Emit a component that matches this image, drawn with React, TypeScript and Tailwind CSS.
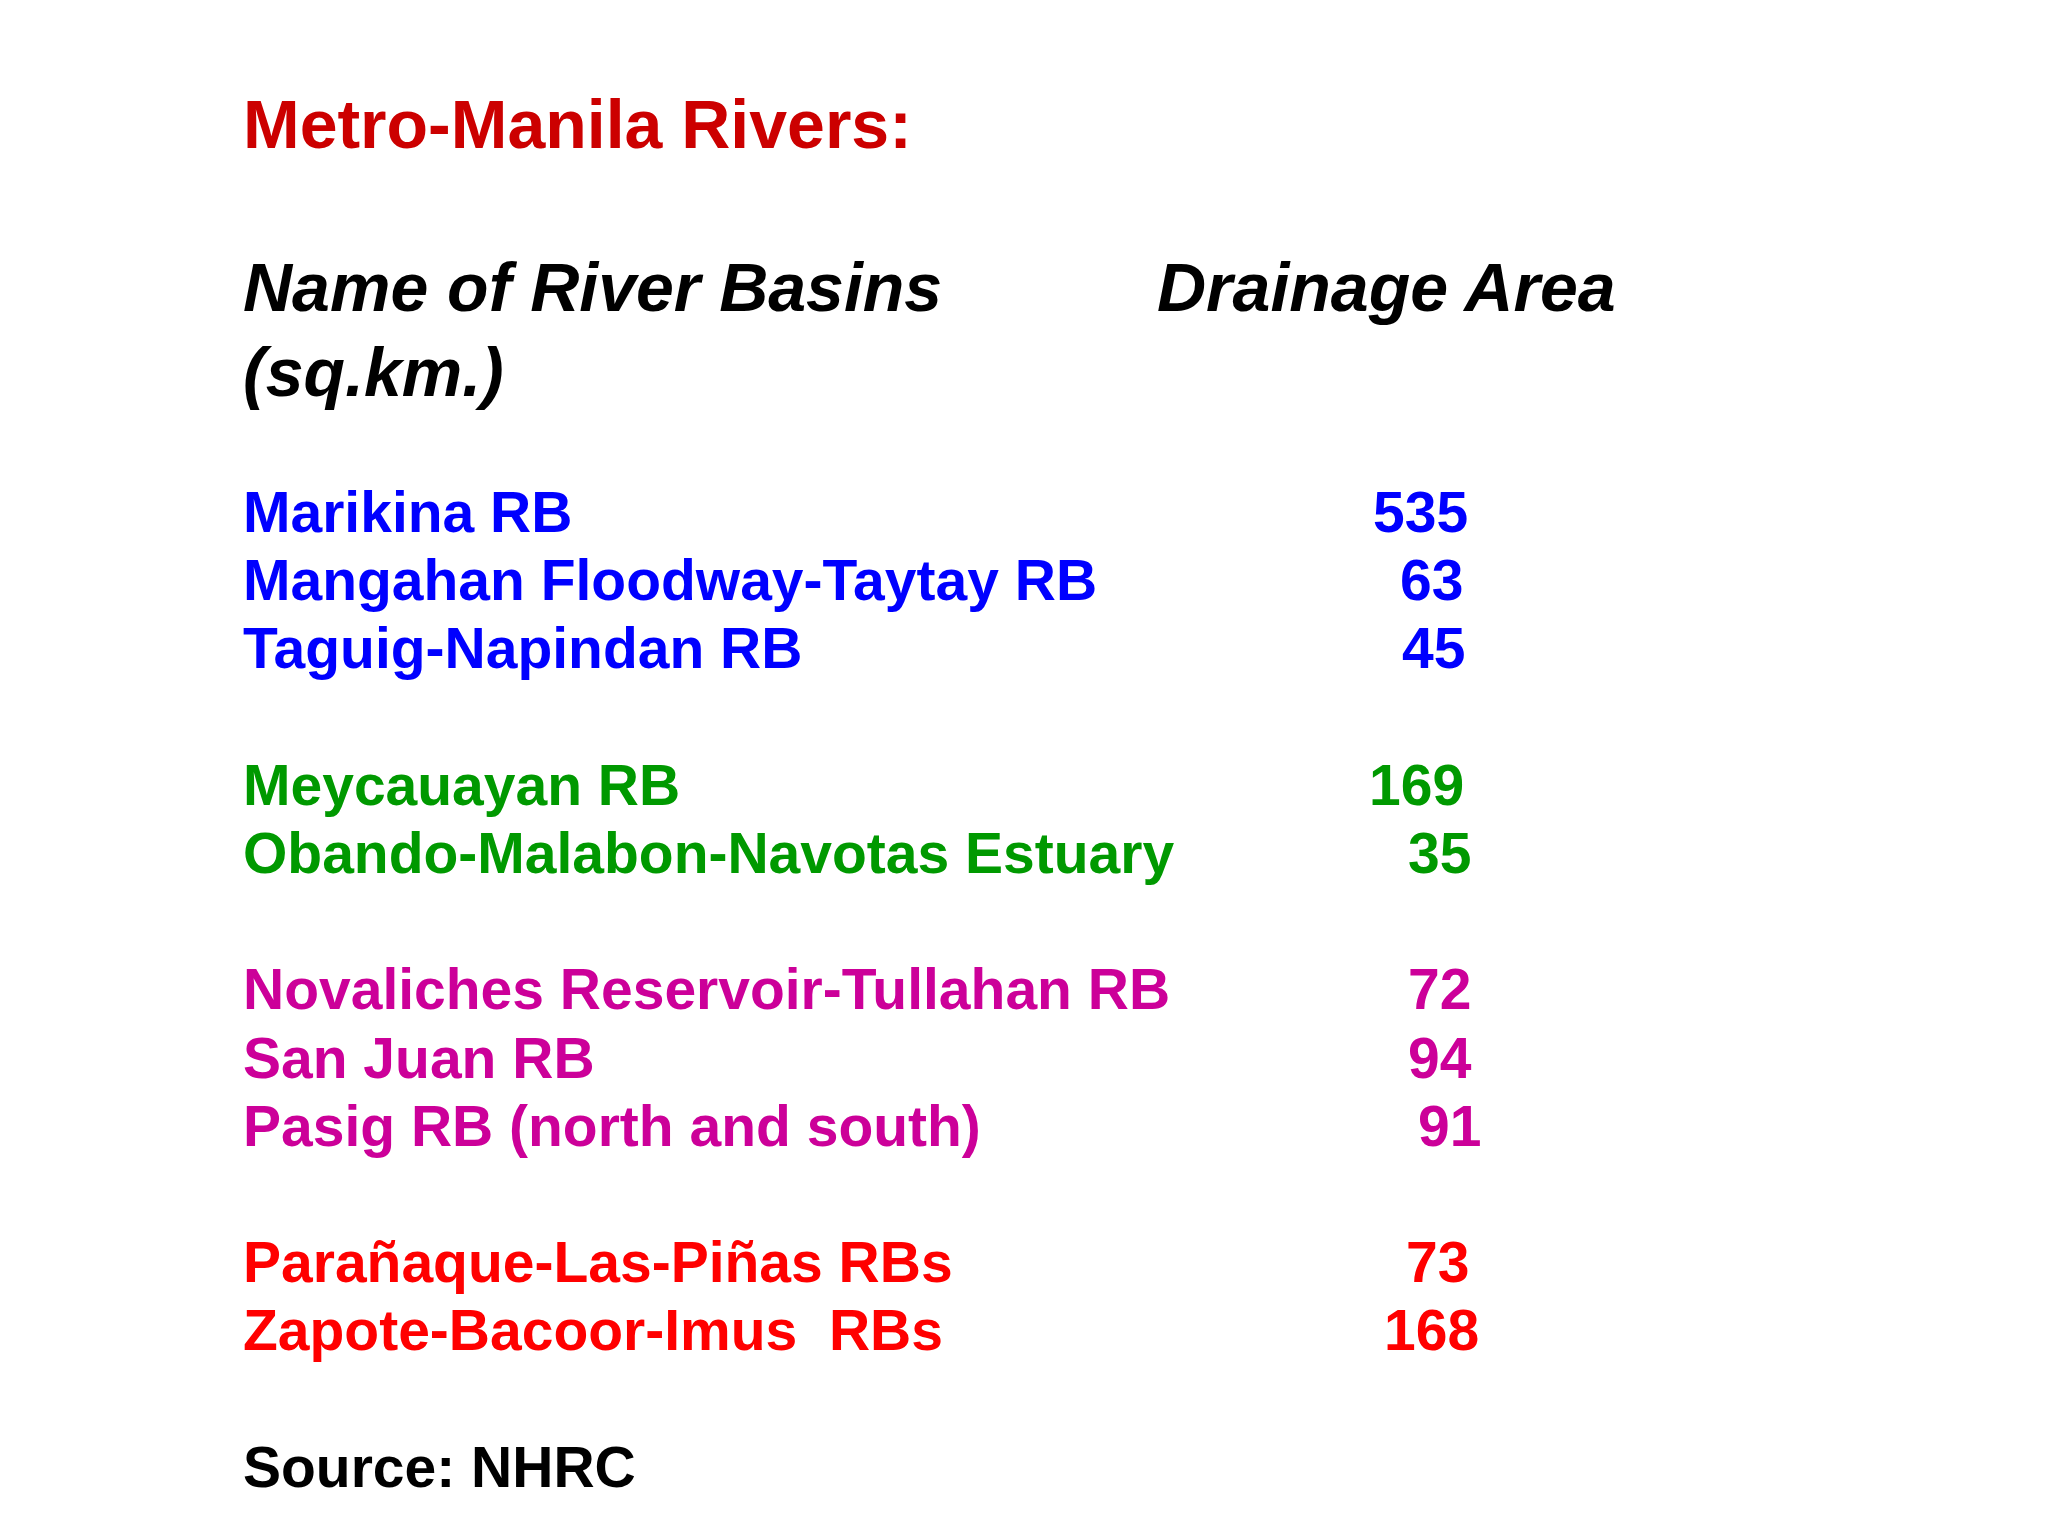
import React from "react";

type Row = { name: string; value: string; color: string; pad: string } | null;

const rows: Row[] = [
  { name: "Marikina RB", value: "535", color: "text-[#0000ff]", pad: "pl-[33px]" },
  { name: "Mangahan Floodway-Taytay RB", value: "63", color: "text-[#0000ff]", pad: "pl-[60px]" },
  { name: "Taguig-Napindan RB", value: "45", color: "text-[#0000ff]", pad: "pl-[62px]" },
  null,
  { name: "Meycauayan RB", value: "169", color: "text-[#009900]", pad: "pl-[29px]" },
  { name: "Obando-Malabon-Navotas Estuary", value: "35", color: "text-[#009900]", pad: "pl-[68px]" },
  null,
  { name: "Novaliches Reservoir-Tullahan RB", value: "72", color: "text-[#cc0099]", pad: "pl-[68px]" },
  { name: "San Juan RB", value: "94", color: "text-[#cc0099]", pad: "pl-[68px]" },
  { name: "Pasig RB (north and south)", value: "91", color: "text-[#cc0099]", pad: "pl-[78px]" },
  null,
  { name: "Parañaque-Las-Piñas RBs", value: "73", color: "text-[#ff0000]", pad: "pl-[66px]" },
  { name: "Zapote-Bacoor-Imus\u00a0 RBs", value: "168", color: "text-[#ff0000]", pad: "pl-[44px]" },
  null,
];

export default function App() {
  return (
    <div
      className="w-[2048px] h-[1536px] bg-white overflow-hidden"
      style={{ fontFamily: '"Liberation Sans", Arial, sans-serif' }}
    >
      <div className="pl-[243px] pt-[84px] flex flex-col font-bold">
        <div className="text-[68px] leading-[80px] text-[#cc0000] whitespace-nowrap">
          Metro-Manila Rivers:
        </div>
        <div className="mt-[84px] text-[68px] leading-[78px] italic text-black whitespace-nowrap">
          <div className="flex">
            <span className="w-[914px]">Name of River Basins</span>
            <span>Drainage Area</span>
          </div>
          <div className="mt-[7px]">(sq.km.)</div>
        </div>
        <div className="mt-[67px] flex flex-col text-[57px] leading-[68px]">
          {rows.map((r, i) =>
            r ? (
              <div key={i} className={`flex h-[68.2px] whitespace-nowrap ${r.color}`}>
                <span className="w-[1097px]">{r.name}</span>
                <span className={r.pad}>{r.value}</span>
              </div>
            ) : (
              <div key={i} className="h-[68.2px]" />
            )
          )}
          <div className="h-[68.2px] whitespace-nowrap text-black">Source: NHRC</div>
        </div>
      </div>
    </div>
  );
}
